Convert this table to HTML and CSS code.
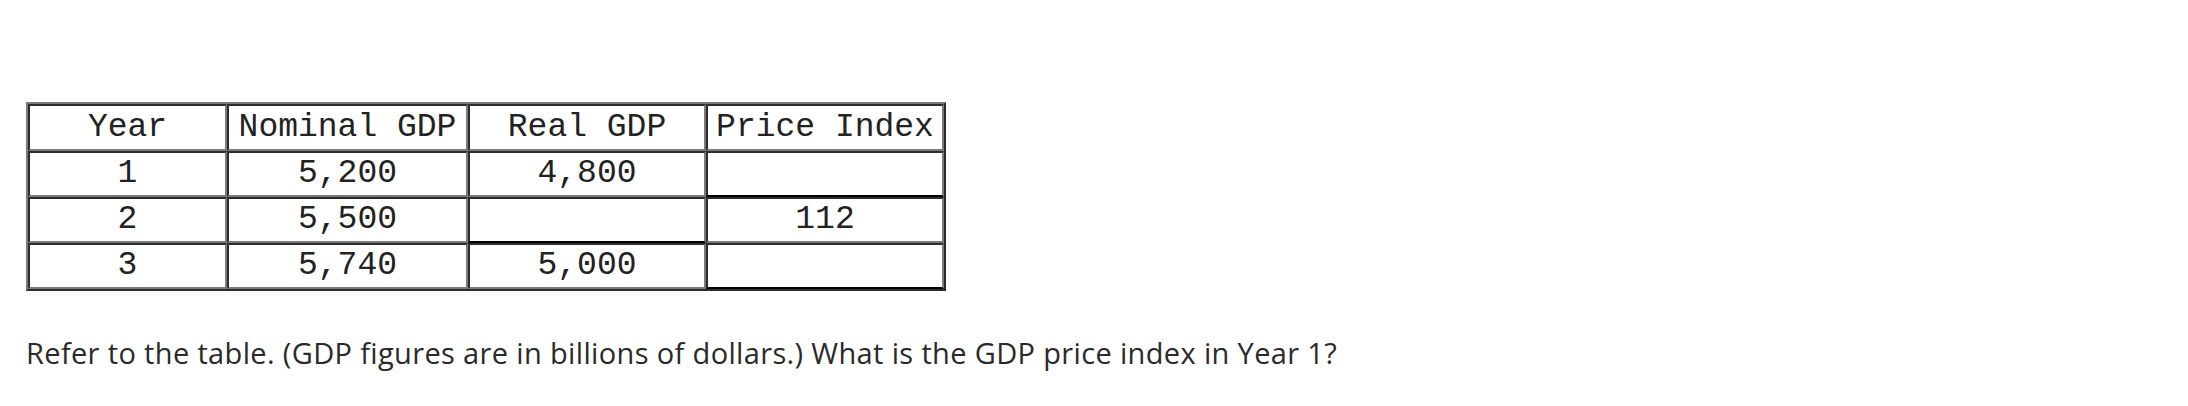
FILE: index.html
```html
<!DOCTYPE html>
<html lang="en">
<head>
<meta charset="utf-8">
<title>GDP price index question</title>
<link rel="stylesheet" href="styles.css">
</head>
<body>
<main class="page">
  <table class="gdp">
    <tr class="head">
      <td class="c-year">Year</td>
      <td class="c-nom">Nominal GDP</td>
      <td class="c-real">Real GDP</td>
      <td class="c-price">Price Index</td>
    </tr>
    <tr>
      <td>1</td>
      <td>5,200</td>
      <td>4,800</td>
      <td class="blank"></td>
    </tr>
    <tr>
      <td>2</td>
      <td>5,500</td>
      <td class="blank"></td>
      <td>112</td>
    </tr>
    <tr>
      <td>3</td>
      <td>5,740</td>
      <td>5,000</td>
      <td class="blank"></td>
    </tr>
  </table>
  <p class="question">Refer to the table. (GDP figures are in billions of dollars.) What is the GDP price index in Year 1?</p>
</main>
</body>
</html>
```

FILE: styles.css
```css
html, body {
  margin: 0;
  padding: 0;
  background: #ffffff;
}

.page {
  padding: 102px 0 0 26px;
}

.gdp {
  border-collapse: separate;
  border-spacing: 0;
  table-layout: fixed;
  width: 920px;
  border-style: solid;
  border-width: 2px;
  border-color: #7b7b7b #2c2c2c #2c2c2c #7b7b7b;
  font-family: "Liberation Mono", "Courier New", monospace;
  font-size: 33px;
  color: #222222;
}

.gdp td {
  box-sizing: border-box;
  padding: 0;
  line-height: 42px;
  text-align: center;
  white-space: nowrap;
  border-style: solid;
  border-width: 2px;
  border-color: #2c2c2c #7b7b7b #7b7b7b #2c2c2c;
}

.gdp .head td {
  line-height: 43px;
}

.gdp td.blank {
  border-bottom-color: #000000;
}

.gdp .c-year { width: 199px; }
.gdp .c-nom { width: 241px; }
.gdp .c-real { width: 238px; }
.gdp .c-price { width: 238px; }

.question {
  margin: 44px 0 0 0;
  font-family: "Open Sans", Lato, sans-serif;
  font-size: 29px;
  line-height: 36px;
  letter-spacing: 0.35px;
  color: #2a2a2a;
  font-variant-ligatures: none;
}
```
